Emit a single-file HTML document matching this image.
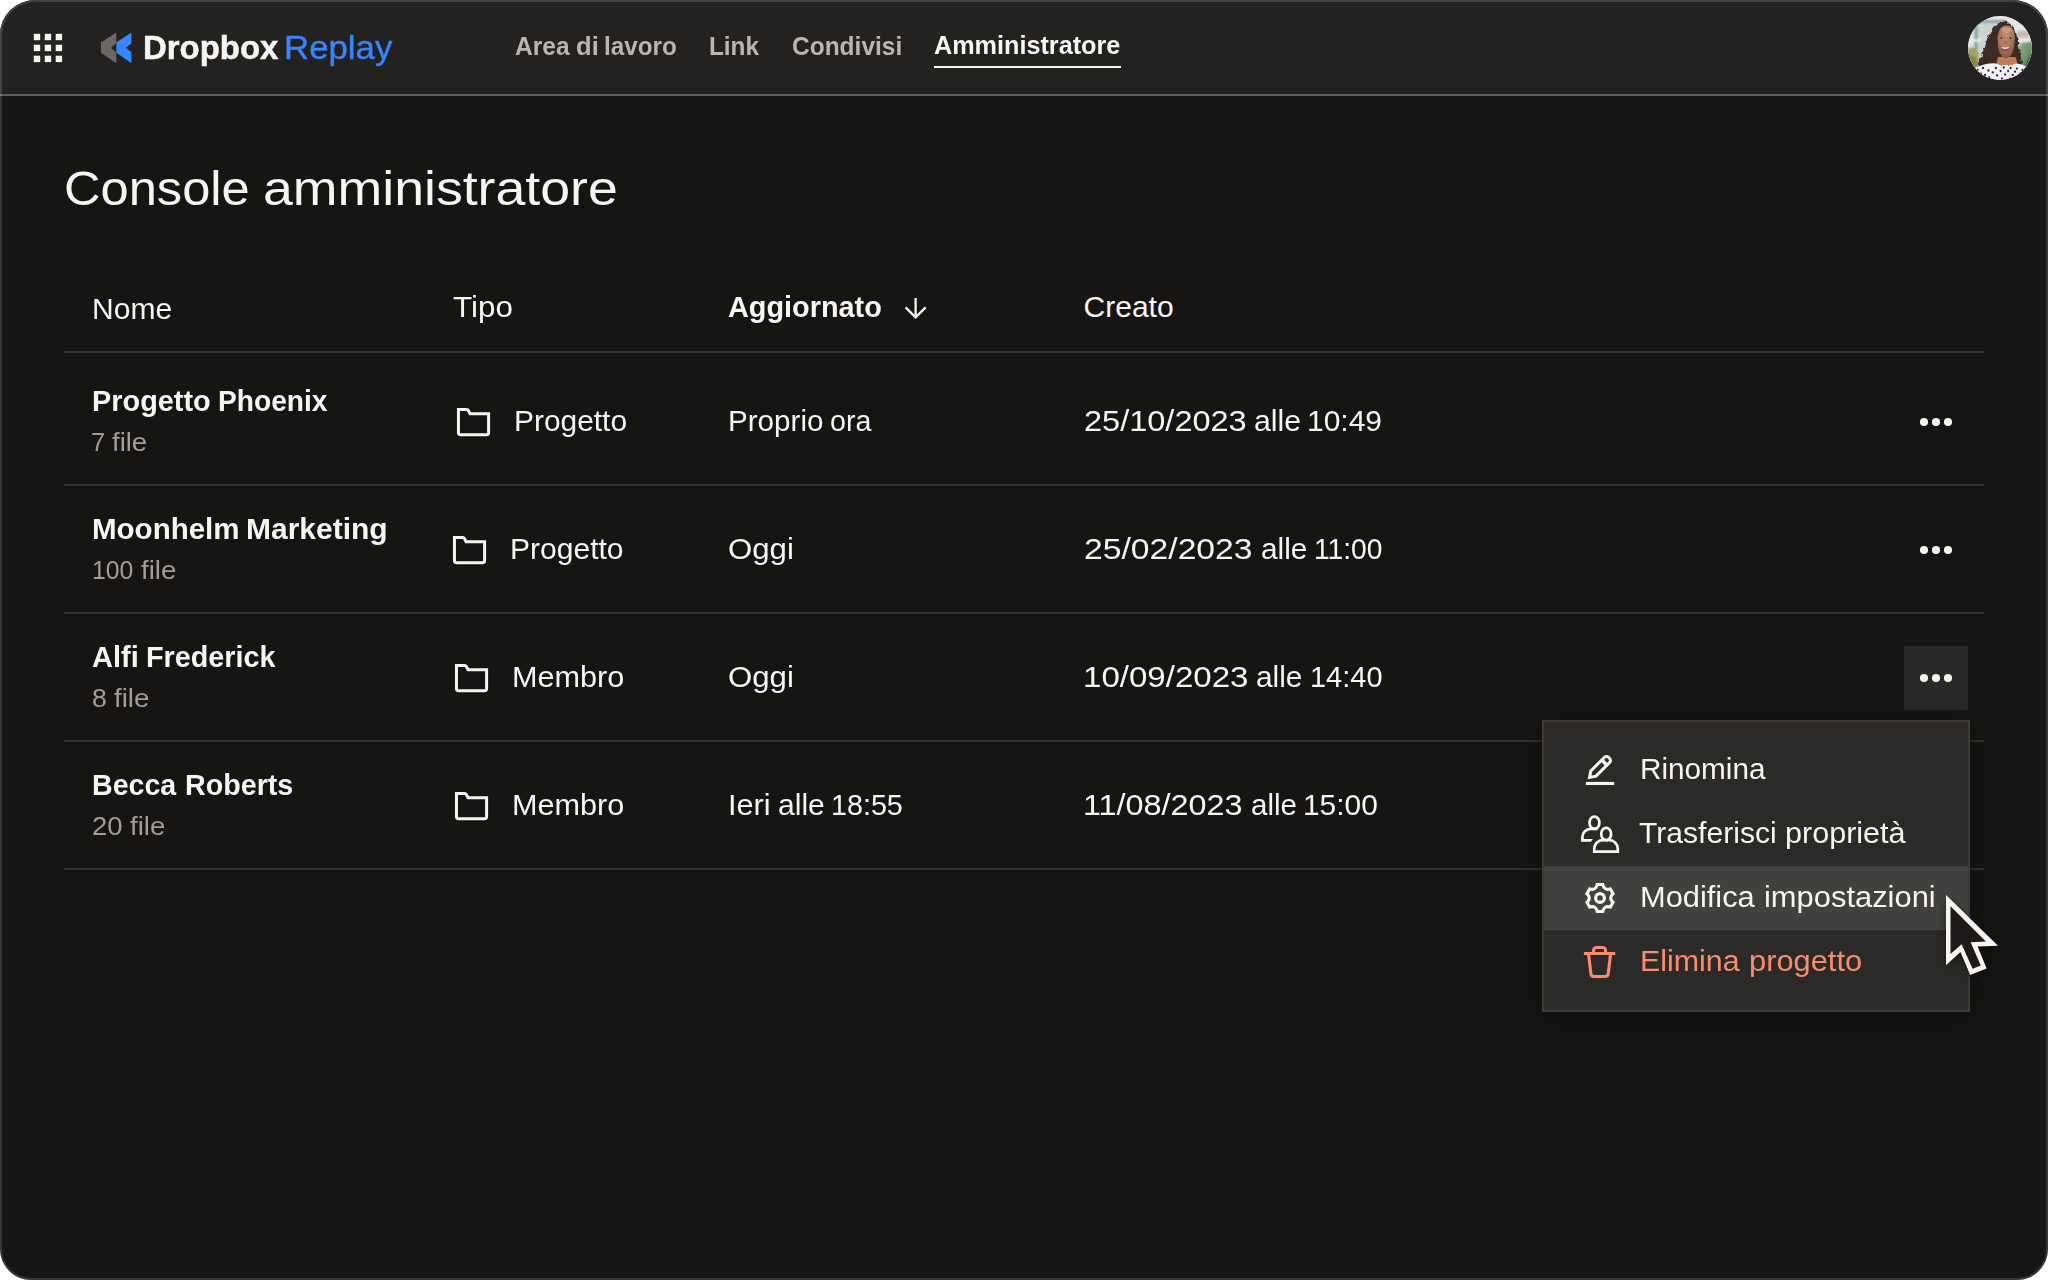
<!DOCTYPE html>
<html lang="it">
<head>
<meta charset="utf-8">
<title>Dropbox Replay – Console amministratore</title>
<style>
*{box-sizing:border-box}
html,body{margin:0;padding:0;background:#fff}
body{width:2048px;height:1280px;overflow:hidden;font-family:"Liberation Sans",sans-serif;-webkit-font-smoothing:antialiased}
.win{position:relative;width:2048px;height:1280px;background:#161514;border-radius:35px 35px 31px 31px;overflow:hidden}
.win::after{content:"";position:absolute;left:0;top:0;width:2048px;height:1280px;border-radius:35px 35px 31px 31px;box-shadow:inset 0 0 0 2px rgba(255,255,255,.145);pointer-events:none;z-index:50}
header{position:absolute;left:0;top:0;width:2048px;height:96px;background:#232221;border-bottom:2px solid #5f5e5d}
.g{margin:0;padding:0;font-weight:400;text-decoration:none;font-size:30px;color:#f7f5f2}
.t{position:absolute;white-space:pre;line-height:1;transform-origin:0 0;display:block}
.logo-a{font-weight:700;font-size:33px;-webkit-text-stroke:.5px #f7f5f2}
.logo-b{font-size:33px;color:#3984ff;-webkit-text-stroke:.35px #3984ff}
.nav{font-weight:700;font-size:26px;color:#bbb5ae}
.nav.on{color:#f7f5f2}
.title{font-size:48px}
.sorted,.name{font-weight:700}
.sub{font-size:26px;color:#a19e9a}
.danger{color:#fa8c6e}
svg{position:absolute;overflow:visible}
.navline{position:absolute;left:934px;top:66px;width:187px;height:2px;background:#f7f5f2}
.hr{position:absolute;left:64px;width:1920px;height:2px;background:#31302e}
.morebtn{position:absolute;left:1904px;top:646px;width:64px;height:64px;background:#292826}
.menu{position:absolute;left:1542px;top:720px;width:428px;height:292px;background:#2b2a28;border:2px solid #3e3b39;box-shadow:0 6px 24px rgba(0,0,0,.35);margin:0;padding:0;list-style:none}
.menu .hover{position:absolute;left:0;top:144px;width:424px;height:64px;background:#42413f}
.avatar{position:absolute;left:1968px;top:16px;width:64px;height:64px;border-radius:50%;overflow:hidden;background:#d9d9d9}
</style>
</head>
<body>
<div class="win">
<header>
<svg class="ico grid" style="left:32px;top:32px" width="32" height="32" viewBox="0 0 32 32" aria-hidden="true"><rect x="1.8" y="1.8" width="6.4" height="6.4" fill="#f7f5f2"/><rect x="12.75" y="1.8" width="6.4" height="6.4" fill="#f7f5f2"/><rect x="23.7" y="1.8" width="6.4" height="6.4" fill="#f7f5f2"/><rect x="1.8" y="12.75" width="6.4" height="6.4" fill="#f7f5f2"/><rect x="12.75" y="12.75" width="6.4" height="6.4" fill="#f7f5f2"/><rect x="23.7" y="12.75" width="6.4" height="6.4" fill="#f7f5f2"/><rect x="1.8" y="23.7" width="6.4" height="6.4" fill="#f7f5f2"/><rect x="12.75" y="23.7" width="6.4" height="6.4" fill="#f7f5f2"/><rect x="23.7" y="23.7" width="6.4" height="6.4" fill="#f7f5f2"/></svg>
<svg class="ico logo" style="left:96px;top:24px" width="48" height="48" viewBox="0 0 48 48" aria-hidden="true"><path d="M20.3 8.5 5 18.4V28.8L20.3 39.2V28.7L15.1 23.8 20.3 18.9Z" fill="#6c6764"/><path d="M35.4 8.5 20.3 18.4V28.8L35.4 39.2V28.2L30 23.8 35.4 19.4Z" fill="#3984ff"/></svg>
<div class="brand"><span class="g logo-a"><span id="t0" class="t" style="left:143.02px;top:31px;transform:scaleX(0.9977)">Dropbox</span></span> <span class="g logo-b"><span id="t1" class="t" style="left:284.21px;top:31px;transform:scaleX(1.0551)">Replay</span></span></div>
<nav><a class="g nav" href="#"><span id="t2" class="t" style="left:514.93px;top:33px;transform:scaleX(0.9445)">Area</span> <span id="t3" class="t" style="left:576.08px;top:33px;transform:scaleX(0.9839)">di</span> <span id="t4" class="t" style="left:603.65px;top:33px;transform:scaleX(0.9332)">lavoro</span></a><a class="g nav" href="#"><span id="t5" class="t" style="left:709.06px;top:33px;transform:scaleX(0.9352)">Link</span></a><a class="g nav" href="#"><span id="t6" class="t" style="left:791.91px;top:33px;transform:scaleX(0.9421)">Condivisi</span></a><a class="g nav on" href="#"><span id="t7" class="t" style="left:933.89px;top:32px;transform:scaleX(0.9695)">Amministratore</span></a><span class="navline"></span></nav>
<div class="avatar" role="img" aria-label="Foto profilo"><svg style="left:0;top:0" width="64" height="64" viewBox="0 0 64 64">
<defs>
<filter id="avb" x="-10%" y="-10%" width="120%" height="120%"><feGaussianBlur stdDeviation="0.8"/></filter>
<filter id="avs" x="-10%" y="-10%" width="120%" height="120%"><feGaussianBlur stdDeviation="0.45"/></filter>
<filter id="avh" x="-15%" y="-15%" width="130%" height="130%"><feTurbulence type="fractalNoise" baseFrequency="0.28" numOctaves="2" seed="7" result="n"/><feDisplacementMap in="SourceGraphic" in2="n" scale="5" xChannelSelector="R" yChannelSelector="G"/><feGaussianBlur stdDeviation="0.5"/></filter>
<filter id="avt" x="0" y="0" width="100%" height="100%"><feTurbulence type="fractalNoise" baseFrequency="0.45" numOctaves="2" seed="11"/><feColorMatrix type="matrix" values="0 0 0 0 0.08  0 0 0 0 0.04  0 0 0 0 0.03  0 0 0 -1.6 0.95"/></filter>
<radialGradient id="avk" cx="48%" cy="30%" r="75%"><stop offset="0" stop-color="#c69378"/><stop offset="0.55" stop-color="#a8745a"/><stop offset="1" stop-color="#83503d"/></radialGradient>
<linearGradient id="avg" x1="0" y1="0" x2="1" y2="1"><stop offset="0" stop-color="#9db79a"/><stop offset="1" stop-color="#3d6b3a"/></linearGradient>
<clipPath id="avc"><circle cx="32" cy="32" r="32"/></clipPath>
<clipPath id="avhc"><path d="M36 5.5C29 6 23 13 19.5 23 16 33 13 41 10 48L13 52 30 49 52 49 54 46C52.5 40 51.5 32 49.5 23 47.5 13 43 5.5 36 5.5Z"/></clipPath>
</defs>
<g clip-path="url(#avc)">
<rect width="64" height="64" fill="#e7e7ea"/>
<g filter="url(#avb)">
<rect x="-2" y="5" width="40" height="34" fill="#c9d5cd"/>
<rect x="-2" y="5" width="9" height="34" fill="#dfe6e6"/>
<rect x="6.6" y="4.5" width="2.7" height="35" fill="#6d8f9b"/>
<rect x="9" y="4.3" width="29" height="2.3" fill="#6d8f9b"/>
<rect x="-2" y="23.4" width="15" height="2.2" fill="#f3f4f6"/>
<rect x="49" y="14.5" width="12" height="8" fill="#c6c0bb"/>
<rect x="49" y="17.5" width="12" height="1.2" fill="#b3aca6"/>
<rect x="50" y="22.5" width="9" height="3" fill="#efece9"/>
<path d="M-2 34Q3 29 8 33 12 37 11 44L12 58H-2Z" fill="#a3a262"/>
<path d="M0 40Q5 38 9 44L10 56H0Z" fill="#7d8a4a"/>
<path d="M48 64 49 34Q52 25 58 26 62 27 66 24V64Z" fill="url(#avg)"/>
<path d="M55 64Q56 44 66 36V64Z" fill="#2f5a2d"/>
</g>
<path d="M36 5.5C29 6 23 13 19.5 23 16 33 13 41 10 48L13 52 30 49 52 49 54 46C52.5 40 51.5 32 49.5 23 47.5 13 43 5.5 36 5.5Z" fill="#3b2924" filter="url(#avh)"/>
<rect x="8" y="4" width="48" height="50" filter="url(#avt)" clip-path="url(#avhc)" opacity="0.55"/>
<g filter="url(#avs)">
<path d="M30 41 47.5 41 50 49 28 49Z" fill="#bf7d5a"/>
<path d="M38.5 9.5C43.8 9.5 46.8 14 46.8 22 46.8 30 45.6 35 43.4 38.6 41.8 41.2 40 42.3 38 42.3 35.6 42.3 33.4 40.6 31.8 37.4 30.2 34 29.6 29 29.8 22.5 30 14.5 33 9.5 38.5 9.5Z" fill="url(#avk)"/>
<path d="M33 12.5Q38.5 9.6 44 13 42 17 38.5 17.4 35 17 33 12.5Z" fill="#cf9f84" opacity="0.7"/>
<path d="M32.4 30.6Q37.4 32.2 42.2 30.4 41.6 35.4 37.4 35.6 33.4 35.4 32.4 30.6Z" fill="#a9485f"/>
<path d="M33 30.8Q37.4 32 41.6 30.7 40.8 33 37.4 33.1 34 33 33 30.8Z" fill="#f3ecea"/>
<path d="M36 24.5Q37.8 27.5 39.6 24.5 39.4 28 37.8 28.2 36.2 28 36 24.5Z" fill="#8a533f" opacity="0.6"/>
<ellipse cx="33.4" cy="22" rx="1.3" ry="0.8" fill="#3a2520"/><ellipse cx="42.6" cy="22" rx="1.3" ry="0.8" fill="#3a2520"/>
</g>
<g fill="none" stroke="#8f817d" stroke-width="0.7" opacity="0.9"><rect x="29.7" y="19" width="7.3" height="5.6" rx="2.2"/><rect x="39.6" y="19" width="7" height="5.6" rx="2.2"/><path d="M37 21.2H39.6"/></g>
<path d="M4 53Q10 50.5 16 48.6 22 47 28 47.4 33 50 38 50 44 50 48 47.6 54 48 61 52L66 66H0Z" fill="#f2f0f3" filter="url(#avs)"/>
<g fill="#26263e" filter="url(#avs)"><circle cx="27.9" cy="52" r="1.15"/><circle cx="35.7" cy="51.5" r="1.15"/><circle cx="42.6" cy="52" r="1.15"/><circle cx="48.9" cy="52.6" r="1.15"/><circle cx="20.4" cy="54.5" r="1.15"/><circle cx="9.5" cy="53.9" r="1.15"/><circle cx="12.9" cy="57.6" r="1.15"/><circle cx="17" cy="58.9" r="1.15"/><circle cx="24.8" cy="56.4" r="1.15"/><circle cx="32.6" cy="55.1" r="1.15"/><circle cx="40.1" cy="55.1" r="1.15"/><circle cx="47" cy="55.7" r="1.15"/><circle cx="54.5" cy="53.9" r="1.15"/><circle cx="29.2" cy="59.5" r="1.15"/><circle cx="37" cy="58.6" r="1.15"/><circle cx="44.8" cy="58.9" r="1.15"/><circle cx="52" cy="57.6" r="1.15"/><circle cx="21" cy="61.4" r="1.15"/><circle cx="33.9" cy="62.6" r="1.15"/><circle cx="42" cy="62.6" r="1.15"/><circle cx="15" cy="52" r="1.15"/></g>
</g>
</svg></div>
</header>
<main>
<h1 class="g title"><span id="t8" class="t" style="left:63.63px;top:165px;transform:scaleX(1.0545)">Console</span> <span id="t9" class="t" style="left:262.72px;top:165px;transform:scaleX(1.1177)">amministratore</span></h1>
<div class="thead"><span class="g th"><span id="t10" class="t" style="left:92.43px;top:294px;transform:scaleX(1.0007)">Nome</span></span><span class="g th"><span id="t11" class="t" style="left:453.15px;top:292px;transform:scaleX(1.0458)">Tipo</span></span><span class="g th sorted"><span id="t12" class="t" style="left:728.23px;top:292px;transform:scaleX(0.9615)">Aggiornato</span></span><span class="g th"><span id="t13" class="t" style="left:1083.59px;top:292px">Creato</span></span>
<svg class="ico sort" style="left:892px;top:284px" width="48" height="48" viewBox="0 0 48 48" aria-hidden="true"><path d="M23.6 13.9V33.3M13.55 23.35 23.6 33.4 33.65 23.35" fill="none" stroke="#f7f5f2" stroke-width="2.3"/></svg></div>
<div class="hr" style="top:351px"></div>
<div class="hr" style="top:484px"></div>
<div class="hr" style="top:612px"></div>
<div class="hr" style="top:740px"></div>
<div class="hr" style="top:868px"></div>
<div class="row row0"><strong class="g name"><span id="t14" class="t" style="left:91.87px;top:386px;transform:scaleX(0.9624)">Progetto</span> <span id="t15" class="t" style="left:217.65px;top:386px;transform:scaleX(0.9381)">Phoenix</span></strong><span class="g sub"><span id="t16" class="t" style="left:91.1px;top:429px;transform:scaleX(0.9834)">7</span> <span id="t17" class="t" style="left:111.92px;top:429px;transform:scaleX(1.0572)">file</span></span><svg class="ico folder" style="left:450px;top:398px" width="48" height="48" viewBox="0 0 48 48" aria-hidden="true"><path d="M8.45 11.4H16.8Q17.75 11.4 18.2 12.25L20.1 15.7H38.6V34.6A2.25 2.25 0 0 1 36.35 36.85H10.7A2.25 2.25 0 0 1 8.45 34.6Z" fill="none" stroke="#f7f5f2" stroke-width="3" stroke-linejoin="miter"/></svg><span class="g type"><span id="t18" class="t" style="left:514.38px;top:406px;transform:scaleX(0.9969)">Progetto</span></span><span class="g upd"><span id="t19" class="t" style="left:727.69px;top:406px;transform:scaleX(0.9866)">Proprio</span> <span id="t20" class="t" style="left:830.04px;top:406px;transform:scaleX(0.9531)">ora</span></span><span class="g crt"><span id="t21" class="t" style="left:1083.62px;top:406px;transform:scaleX(1.0836)">25/10/2023</span> <span id="t22" class="t" style="left:1253.91px;top:406px;transform:scaleX(1.0086)">alle</span> <span id="t23" class="t" style="left:1307.35px;top:406px;transform:scaleX(0.9997)">10:49</span></span><svg class="ico more" style="left:1920px;top:416px" width="32" height="12" viewBox="0 0 32 12" aria-hidden="true"><circle cx="4" cy="6" r="4.05" fill="#f7f5f2"/><circle cx="16" cy="6" r="4.05" fill="#f7f5f2"/><circle cx="28" cy="6" r="4.05" fill="#f7f5f2"/></svg></div>
<div class="row row1"><strong class="g name"><span id="t24" class="t" style="left:91.6px;top:514px;transform:scaleX(0.9839)">Moonhelm</span> <span id="t25" class="t" style="left:246.36px;top:514px;transform:scaleX(0.9996)">Marketing</span></strong><span class="g sub"><span id="t26" class="t" style="left:91.74px;top:557px;transform:scaleX(0.9504)">100</span> <span id="t27" class="t" style="left:141.21px;top:557px;transform:scaleX(1.0628)">file</span></span><svg class="ico folder" style="left:446px;top:526px" width="48" height="48" viewBox="0 0 48 48" aria-hidden="true"><path d="M8.45 11.4H16.8Q17.75 11.4 18.2 12.25L20.1 15.7H38.6V34.6A2.25 2.25 0 0 1 36.35 36.85H10.7A2.25 2.25 0 0 1 8.45 34.6Z" fill="none" stroke="#f7f5f2" stroke-width="3" stroke-linejoin="miter"/></svg><span class="g type"><span id="t28" class="t" style="left:509.55px;top:534px;transform:scaleX(1.0010)">Progetto</span></span><span class="g upd"><span id="t29" class="t" style="left:727.79px;top:534px;transform:scaleX(1.0388)">Oggi</span></span><span class="g crt"><span id="t30" class="t" style="left:1083.51px;top:534px;transform:scaleX(1.1225)">25/02/2023</span> <span id="t31" class="t" style="left:1260.82px;top:534px;transform:scaleX(0.9953)">alle</span> <span id="t32" class="t" style="left:1313.75px;top:534px;transform:scaleX(0.9401)">11:00</span></span><svg class="ico more" style="left:1920px;top:544px" width="32" height="12" viewBox="0 0 32 12" aria-hidden="true"><circle cx="4" cy="6" r="4.05" fill="#f7f5f2"/><circle cx="16" cy="6" r="4.05" fill="#f7f5f2"/><circle cx="28" cy="6" r="4.05" fill="#f7f5f2"/></svg></div>
<div class="row row2"><strong class="g name"><span id="t33" class="t" style="left:92.18px;top:642px;transform:scaleX(0.9679)">Alfi</span> <span id="t34" class="t" style="left:146.34px;top:642px;transform:scaleX(0.9578)">Frederick</span></strong><span class="g sub"><span id="t35" class="t" style="left:92.06px;top:685px;transform:scaleX(1.0273)">8</span> <span id="t36" class="t" style="left:113.82px;top:685px;transform:scaleX(1.0652)">file</span></span><svg class="ico folder" style="left:448px;top:654px" width="48" height="48" viewBox="0 0 48 48" aria-hidden="true"><path d="M8.45 11.4H16.8Q17.75 11.4 18.2 12.25L20.1 15.7H38.6V34.6A2.25 2.25 0 0 1 36.35 36.85H10.7A2.25 2.25 0 0 1 8.45 34.6Z" fill="none" stroke="#f7f5f2" stroke-width="3" stroke-linejoin="miter"/></svg><span class="g type"><span id="t37" class="t" style="left:511.78px;top:662px;transform:scaleX(1.0211)">Membro</span></span><span class="g upd"><span id="t38" class="t" style="left:727.79px;top:662px;transform:scaleX(1.0388)">Oggi</span></span><span class="g crt"><span id="t39" class="t" style="left:1082.77px;top:662px;transform:scaleX(1.1022)">10/09/2023</span> <span id="t40" class="t" style="left:1255.89px;top:662px;transform:scaleX(0.9951)">alle</span> <span id="t41" class="t" style="left:1309.51px;top:662px;transform:scaleX(0.9659)">14:40</span></span><span class="morebtn"></span><svg class="ico more" style="left:1920px;top:672px" width="32" height="12" viewBox="0 0 32 12" aria-hidden="true"><circle cx="4" cy="6" r="4.05" fill="#f7f5f2"/><circle cx="16" cy="6" r="4.05" fill="#f7f5f2"/><circle cx="28" cy="6" r="4.05" fill="#f7f5f2"/></svg></div>
<div class="row row3"><strong class="g name"><span id="t42" class="t" style="left:91.71px;top:770px;transform:scaleX(0.9522)">Becca</span> <span id="t43" class="t" style="left:184.94px;top:770px;transform:scaleX(0.9554)">Roberts</span></strong><span class="g sub"><span id="t44" class="t" style="left:91.72px;top:813px;transform:scaleX(1.0590)">20</span> <span id="t45" class="t" style="left:129.63px;top:813px;transform:scaleX(1.0607)">file</span></span><svg class="ico folder" style="left:448px;top:782px" width="48" height="48" viewBox="0 0 48 48" aria-hidden="true"><path d="M8.45 11.4H16.8Q17.75 11.4 18.2 12.25L20.1 15.7H38.6V34.6A2.25 2.25 0 0 1 36.35 36.85H10.7A2.25 2.25 0 0 1 8.45 34.6Z" fill="none" stroke="#f7f5f2" stroke-width="3" stroke-linejoin="miter"/></svg><span class="g type"><span id="t46" class="t" style="left:511.78px;top:790px;transform:scaleX(1.0211)">Membro</span></span><span class="g upd"><span id="t47" class="t" style="left:727.66px;top:790px;transform:scaleX(1.0231)">Ieri</span> <span id="t48" class="t" style="left:777.81px;top:790px;transform:scaleX(1.0033)">alle</span> <span id="t49" class="t" style="left:831.19px;top:790px;transform:scaleX(0.9569)">18:55</span></span><span class="g crt"><span id="t50" class="t" style="left:1082.83px;top:790px;transform:scaleX(1.0789)">11/08/2023</span> <span id="t51" class="t" style="left:1250.74px;top:790px;transform:scaleX(0.9840)">alle</span> <span id="t52" class="t" style="left:1303.22px;top:790px;transform:scaleX(0.9960)">15:00</span></span></div>
</main>
<ul class="menu" role="menu"><li class="hover"></li><li role="menuitem"><svg class="ico" style="left:32px;top:24px" width="48" height="48" viewBox="0 0 48 48" aria-hidden="true"><rect x="9.85" y="35.9" width="28.3" height="3.1" fill="#f7f5f2"/><g transform="translate(22.47 22.47) rotate(-45)" fill="none" stroke="#f7f5f2" stroke-width="3" stroke-linejoin="miter"><path d="M-12.6 0 -7.2 -3.65H12.2A2.8 2.8 0 0 1 15 -0.85V0.85A2.8 2.8 0 0 1 12.2 3.65H-7.2Z"/><path d="M8.3 -3.65V3.65" stroke-width="3.6"/></g></svg><span class="g mi"><span id="t53" class="t" style="left:95.86px;top:32px;transform:scaleX(0.9898)">Rinomina</span></span></li><li role="menuitem"><svg class="ico" style="left:32px;top:88px" width="48" height="48" viewBox="0 0 48 48" aria-hidden="true"><g fill="none" stroke="#f7f5f2" stroke-width="2.7"><ellipse cx="18.45" cy="12.7" rx="4.95" ry="6.15"/><path d="M15.2 30.45H6.4V27.2A8.4 8.4 0 0 1 14.8 18.85H21.6"/><ellipse cx="30.15" cy="24" rx="4.95" ry="6.15"/><path d="M18.25 41.55V38.7A8.5 8.5 0 0 1 26.75 30.2H33.3A8.5 8.5 0 0 1 41.8 38.7V41.55Z"/></g><path d="M15 29.1H16.9L14.7 31.8H15Z" fill="#f7f5f2"/></svg><span class="g mi"><span id="t54" class="t" style="left:95.32px;top:96px;transform:scaleX(1.0038)">Trasferisci</span> <span id="t55" class="t" style="left:240.55px;top:96px;transform:scaleX(1.0183)">proprietà</span></span></li><li role="menuitem"><svg class="ico" style="left:32px;top:152px" width="48" height="48" viewBox="0 0 48 48" aria-hidden="true"><path d="M21.26 10.53L26.74 10.53Q28.15 16.81 34.30 14.89L37.04 19.64Q32.30 24.00 37.04 28.36L34.30 33.11Q28.15 31.19 26.74 37.47L21.26 37.47Q19.85 31.19 13.70 33.11L10.96 28.36Q15.70 24.00 10.96 19.64L13.70 14.89Q19.85 16.81 21.26 10.53Z" fill="none" stroke="#f7f5f2" stroke-width="3.1" stroke-linejoin="miter"/><circle cx="24" cy="24" r="4.4" fill="none" stroke="#f7f5f2" stroke-width="3.2"/></svg><span class="g mi"><span id="t56" class="t" style="left:95.67px;top:160px;transform:scaleX(1.0272)">Modifica</span> <span id="t57" class="t" style="left:219.83px;top:160px;transform:scaleX(1.0297)">impostazioni</span></span></li><li role="menuitem"><svg class="ico" style="left:32px;top:216px" width="48" height="48" viewBox="0 0 48 48" aria-hidden="true"><g fill="none" stroke="#fa8c6e" stroke-width="3.1"><path d="M7.9 15.5H39.2"/><path d="M17.5 15.5V12.4A3 3 0 0 1 20.5 9.45H26.6A3 3 0 0 1 29.6 12.4V15.5"/><path d="M12.5 15.5 14.9 35.6A3.2 3.2 0 0 0 18.1 38.5H29A3.2 3.2 0 0 0 32.2 35.6L34.65 15.5"/></g></svg><span class="g mi danger"><span id="t58" class="t" style="left:96.31px;top:224px;transform:scaleX(1.0129)">Elimina</span> <span id="t59" class="t" style="left:204.55px;top:224px;transform:scaleX(1.0273)">progetto</span></span></li></ul>
<svg class="ico cursor" style="left:1930px;top:884px;z-index:60;filter:drop-shadow(0 3px 5px rgba(0,0,0,.45))" width="80" height="100" viewBox="0 0 80 100" aria-hidden="true"><path d="M16 10.9 68 61.7 47.7 62.5 56.6 84.4 40.2 91 30.5 68 16 81.25Z" fill="#f7f5f2"/><path d="M20.5 22.3 55.9 57.4 40.6 58.2 50.8 81.6 42.6 84.8 31.6 60.2 20.5 69.9Z" fill="#1e1a19"/></svg>
</div>
</body>
</html>
